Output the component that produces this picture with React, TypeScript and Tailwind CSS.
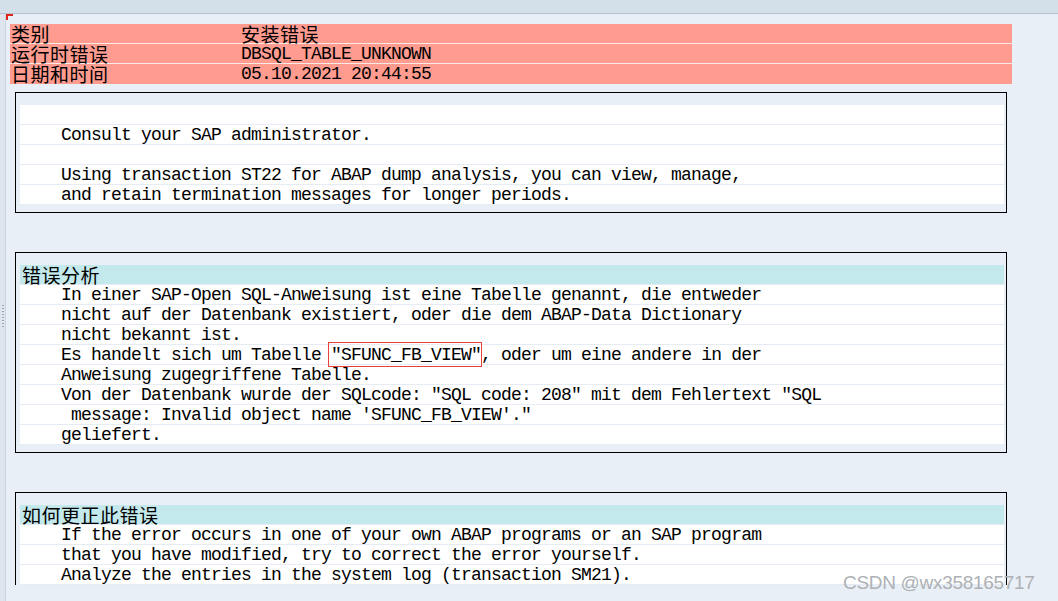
import React from 'react';

type Line = { text: string; mark?: { before: string; hit: string; after: string } };

const summary = [
  { label: '类别', value: '安装错误', cjk: true },
  { label: '运行时错误', value: 'DBSQL_TABLE_UNKNOWN', cjk: false },
  { label: '日期和时间', value: '05.10.2021 20:44:55', cjk: false },
];

const adviceLines: Line[] = [
  { text: '' },
  { text: '    Consult your SAP administrator.' },
  { text: '' },
  { text: '    Using transaction ST22 for ABAP dump analysis, you can view, manage,' },
  { text: '    and retain termination messages for longer periods.' },
];

const analysisLines: Line[] = [
  { text: '    In einer SAP-Open SQL-Anweisung ist eine Tabelle genannt, die entweder' },
  { text: '    nicht auf der Datenbank existiert, oder die dem ABAP-Data Dictionary' },
  { text: '    nicht bekannt ist.' },
  {
    text: '',
    mark: {
      before: '    Es handelt sich um Tabelle ',
      hit: '"SFUNC_FB_VIEW"',
      after: ', oder um eine andere in der',
    },
  },
  { text: '    Anweisung zugegriffene Tabelle.' },
  { text: '    Von der Datenbank wurde der SQLcode: "SQL code: 208" mit dem Fehlertext "SQL' },
  { text: "     message: Invalid object name 'SFUNC_FB_VIEW'.\"" },
  { text: '    geliefert.' },
];

const fixLines: Line[] = [
  { text: '    If the error occurs in one of your own ABAP programs or an SAP program' },
  { text: '    that you have modified, try to correct the error yourself.' },
  { text: '    Analyze the entries in the system log (transaction SM21).' },
];

const mono = "font-['Liberation_Mono','Noto_Sans_CJK_SC',monospace] text-[18px] tracking-[-0.8px]";
const cjk = "font-['Noto_Sans_CJK_SC',sans-serif] text-[19px] tracking-[0.5px]";

function TextRow({ line }: { line: Line }) {
  return (
    <div
      className={`h-[20px] border-b border-[#e5ecf3] bg-white pl-[1px] whitespace-pre leading-[21px] text-black ${mono}`}
    >
      {line.mark ? (
        <>
          {line.mark.before}
          <span className="relative">
            {line.mark.hit}
            <span className="absolute -left-[3px] -right-[1px] -top-[3px] -bottom-[2px] border border-[#e8403a]" />
          </span>
          {line.mark.after}
        </>
      ) : (
        line.text
      )}
    </div>
  );
}

function Section({
  title,
  lines,
  open,
}: {
  title?: string;
  lines: Line[];
  open?: boolean;
}) {
  return (
    <div
      className={`ml-[5px] w-[992px] border border-black pl-[4px] pr-[2px] pt-[12px] ${
        open ? 'border-b-0 pb-0' : 'pb-[7px]'
      }`}
    >
      {title && (
        <div className={`h-[20px] border-b border-[#e5ecf3] bg-[#c3e9ec] pl-[2px] leading-[20px] text-black ${cjk}`}>
          {title}
        </div>
      )}
      {lines.map((line, i) => (
        <TextRow key={i} line={line} />
      ))}
    </div>
  );
}

export default function App() {
  return (
    <div className="relative flex h-[601px] w-[1058px] flex-col overflow-hidden bg-[#e9eff6]">
      {/* window title strip */}
      <div className="h-[14px] shrink-0 border-b border-[#b5c3d0] bg-[#d3dfe9]" />

      <div className="flex flex-1">
        {/* left grip column */}
        <div className="flex w-[6px] shrink-0 flex-col items-center border-r border-[#cbd5df] bg-[#dee5ed]">
          <div className="mt-[291px] flex flex-col gap-[2px]">
            {Array.from({ length: 8 }).map((_, i) => (
              <span key={i} className="h-[1px] w-[2px] bg-[#9aa6b2]" />
            ))}
          </div>
        </div>

        <div className="relative flex-1 pl-[4px] pt-[10px]">
          {/* cursor corner */}
          <span className="absolute left-0 top-0 h-[6px] w-[7px] border-l-2 border-t-2 border-[#e0251b]" />

          {/* header summary */}
          <div className="w-[1002px]">
            {summary.map((row, i) => (
              <div
                key={row.label}
                className={`grid h-[20px] grid-cols-[230px_1fr] bg-[#ff9b8f] pl-[1px] text-black ${
                  i < summary.length - 1 ? 'border-b border-[#fbe9e6]' : 'h-[19px]'
                }`}
              >
                <span className={`leading-[19px] ${cjk}`}>{row.label}</span>
                <span className={`leading-[20px] ${row.cjk ? cjk : mono}`}>{row.value}</span>
              </div>
            ))}
          </div>

          <div className="mt-[8px]">
            <Section lines={adviceLines} />
          </div>
          <div className="mt-[39px]">
            <Section title="错误分析" lines={analysisLines} />
          </div>
          <div className="mt-[39px]">
            <Section title="如何更正此错误" lines={fixLines} open />
          </div>
        </div>
      </div>

      {/* watermark */}
      <span className="absolute left-[843px] top-[569px] font-['Liberation_Sans',sans-serif] text-[19px] tracking-[-0.3px] text-[#adb1b5]">
        CSDN @wx358165717
      </span>
    </div>
  );
}
